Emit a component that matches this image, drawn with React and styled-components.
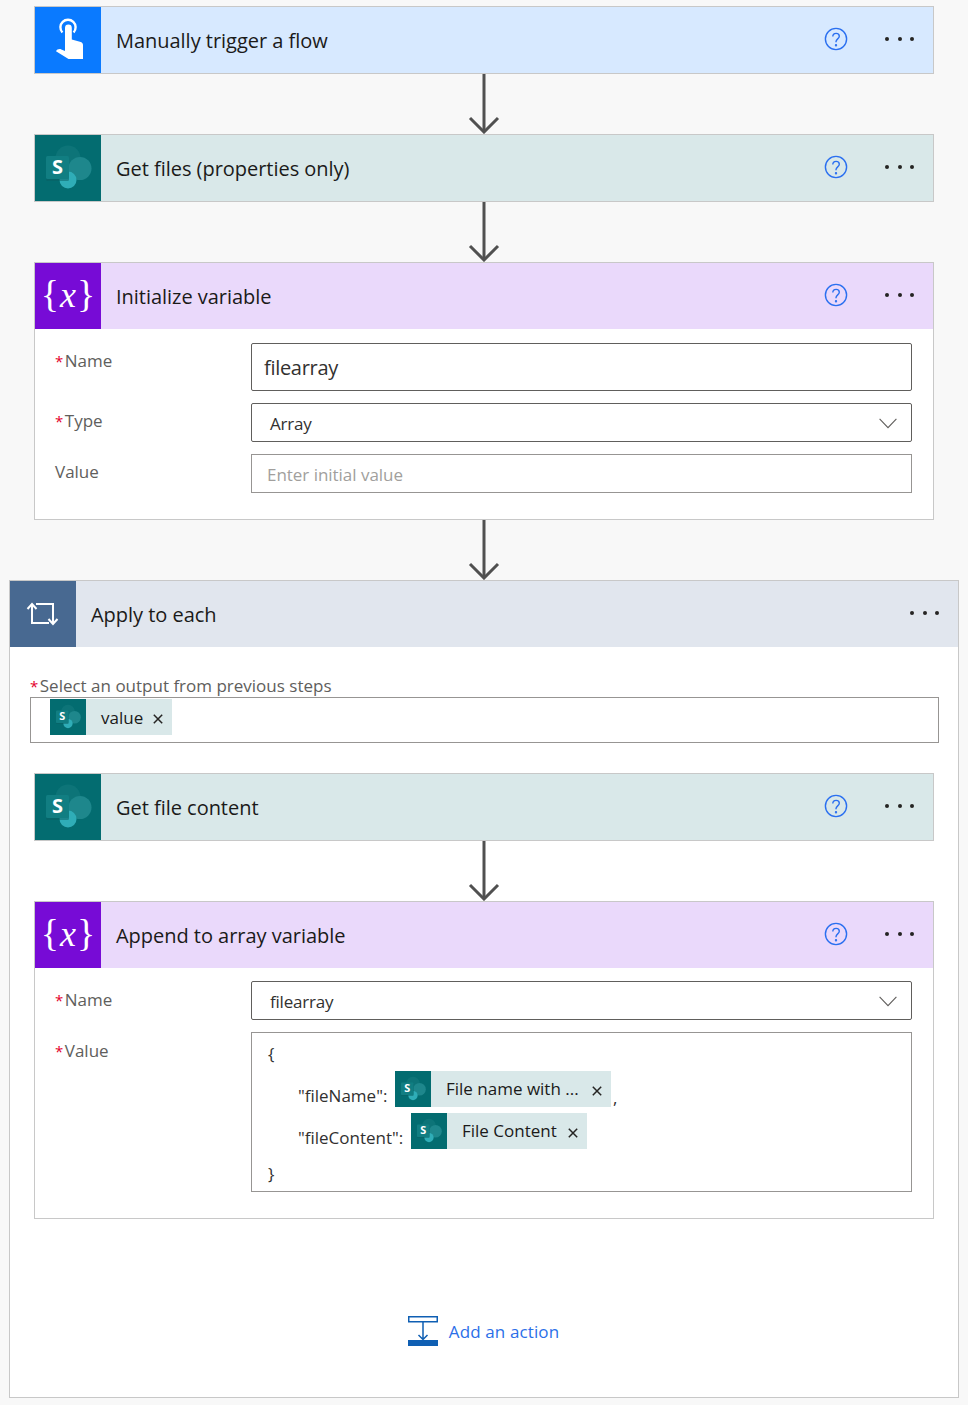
import React from 'react';
import styled, { createGlobalStyle } from 'styled-components';

const tones = {
    trigger: { head: '#d7e9ff', icon: '#0a7aff' },
    sharepoint: { head: '#d9e8e9', icon: '#036c70' },
    variable: { head: '#ead9fb', icon: '#770bd6' },
    loop: { head: '#e1e6ee', icon: '#486991' },
};

const GlobalStyle = createGlobalStyle`
    html, body {
        margin: 0;
        padding: 0;
        background-color: #f8f8f8;
        font-family: "Open Sans", "Liberation Sans", sans-serif;
        color: #201f1e;
    }
`;

const Page = styled.main`
    width: 968px;
    height: 1405px;
    box-sizing: border-box;
    padding-top: 6px;
    display: flex;
    flex-direction: column;
    align-items: center;
`;

const Card = styled.section`
    width: 900px;
    box-sizing: border-box;
    flex-shrink: 0;
    background-color: #fff;
    border: 1px solid #c8c8c8;
`;

const LoopCard = styled(Card)`
    width: 950px;
    height: 818px;
`;

const Header = styled.header`
    height: 66px;
    display: flex;
    align-items: center;
    background-color: ${({ $tone }) => tones[$tone].head};
`;

const IconBox = styled.div`
    width: 66px;
    height: 66px;
    flex-shrink: 0;
    display: flex;
    align-items: center;
    justify-content: center;
    background-color: ${({ $tone }) => tones[$tone].icon};
`;

const Title = styled.h2`
    flex: 1;
    margin: 2px 0 0 15px;
    font-size: 20px;
    line-height: 28px;
    font-weight: 400;
    letter-spacing: -0.03px;
    color: #1b1a19;
`;

const HelpButton = styled.svg`
    width: 24px;
    height: 24px;
    margin-right: 37px;
    margin-top: -2px;
`;

const Dots = styled.div`
    width: 29px;
    margin-right: 19px;
    margin-top: -2px;
    display: flex;
    justify-content: space-between;
`;

const Dot = styled.span`
    width: 4px;
    height: 4px;
    border-radius: 50%;
    background-color: #252423;
`;

const ArrowWrap = styled.svg`
    display: block;
    flex-shrink: 0;
    width: 32px;
    height: 60px;
`;

const Form = styled.div`
    padding: ${({ $top }) => $top}px 21px 26px 20px;
    display: flex;
    flex-direction: column;
    gap: 12px;
`;

const Row = styled.div`
    display: grid;
    grid-template-columns: 196px 661px;
`;

const Label = styled.label`
    padding-top: ${({ $drop }) => $drop}px;
    font-size: 17px;
    line-height: 24px;
    color: #605e5c;
`;

const Star = styled.span`
    margin-right: 1.5px;
    color: #e3002c;
    font-size: 15px;
`;

const Field = styled.div`
    box-sizing: border-box;
    height: ${({ $h }) => $h}px;
    display: flex;
    align-items: center;
    justify-content: space-between;
    border: 1px solid #605e5c;
    border-radius: 2px;
    background-color: #fff;
`;

const NameInput = styled(Field)`
    padding-left: 12px;
    font-size: 20px;
    letter-spacing: -0.3px;
    color: #323130;
`;

const SelectField = styled(Field)`
    padding: 2px 14px 0 18px;
    font-size: 17px;
    letter-spacing: -0.2px;
    color: #323130;
`;

const Placeholder = styled(Field)`
    padding: 2px 0 0 15px;
    border-color: #979593;
    border-radius: 0;
    font-size: 17px;
    letter-spacing: -0.03px;
    color: #a19f9d;
`;

const Chevron = styled.svg`
    width: 18px;
    height: 11px;
`;

const VarIcon = styled.span`
    font-family: "Liberation Serif", "DejaVu Serif", serif;
    font-size: 38px;
    line-height: 1;
    color: #fff;
    white-space: nowrap;
    margin-top: -5px;
    em {
        font-size: 36px;
        margin: 0 1px;
    }
`;

const LoopBody = styled.div`
    padding: 29px 19px 0 20px;
    display: flex;
    flex-direction: column;
`;

const OutputLabel = styled.div`
    height: 21px;
    font-size: 17px;
    line-height: 20px;
    color: #605e5c;
`;

const OutputBox = styled.div`
    box-sizing: border-box;
    height: 46px;
    padding: 1px 0 0 19px;
    display: flex;
    border: 1px solid #979593;
`;

const Token = styled.span`
    box-sizing: border-box;
    width: ${({ $w }) => $w}px;
    height: 36px;
    flex-shrink: 0;
    display: inline-flex;
    align-items: center;
    background-color: #d9e8e9;
`;

const TokenIcon = styled.span`
    width: 36px;
    height: 36px;
    flex-shrink: 0;
    display: flex;
    background-color: #036c70;
`;

const TokenText = styled.span`
    flex: 1;
    padding-left: 15px;
    font-size: 17px;
    white-space: nowrap;
    color: #1b1a19;
`;

const Close = styled.svg`
    width: 10px;
    height: 10px;
    margin: 4px 9px 0 0;
`;

const Flow = styled.div`
    margin: 30px 5px 0 4px;
    display: flex;
    flex-direction: column;
    align-items: center;
`;

const CodeBox = styled.div`
    box-sizing: border-box;
    height: 160px;
    padding: 9px 0 0 16px;
    border: 1px solid #979593;
    font-size: 17px;
    line-height: 24px;
    color: #323130;
`;

const Brace = styled.div`
    margin-top: ${({ $top }) => $top}px;
`;

const CodeRow = styled.div`
    display: flex;
    align-items: flex-end;
    margin-top: ${({ $top }) => $top}px;
    padding-left: 30px;
`;

const Key = styled.span`
    width: ${({ $w }) => $w}px;
    margin-bottom: -1px;
    flex-shrink: 0;
    white-space: nowrap;
`;

const Comma = styled.span`
    margin-left: 2px;
    line-height: 18px;
`;

const AddAction = styled.button`
    margin: 97px auto 0;
    padding: 0 2px 0 0;
    border: 0;
    background: none;
    display: flex;
    align-items: center;
    gap: 11px;
    font-family: inherit;
    font-size: 17px;
    letter-spacing: 0.12px;
    color: #2b6fe8;
`;

function SharePointLogo() {
    return (
        <svg width="100%" height="100%" viewBox="0 0 66 66">
            <circle cx="33" cy="23" r="12.5" fill="#0d7478" />
            <circle cx="45" cy="33.5" r="11.5" fill="#1e878c" />
            <circle cx="33" cy="45" r="8.5" fill="#2fadb7" />
            <rect x="11" y="22" width="23" height="24" rx="1.5" fill="#0a5e62" opacity=".5" />
            <rect x="11" y="21" width="23" height="23" rx="1.5" fill="#117e82" />
            <text x="22.5" y="39" textAnchor="middle" fontFamily="Open Sans, sans-serif" fontWeight="700" fontSize="20" fill="#fff">S</text>
        </svg>
    );
}

function HandIcon() {
    return (
        <svg width="66" height="66" viewBox="0 0 66 66">
            <path d="M27.4 25.5a7.6 7.6 0 1 1 11.2 0" fill="none" stroke="#fff" strokeWidth="2.4" />
            <path d="M30 21a3.4 3.4 0 0 1 6.8 0v11.5l9 2.6c1.5.5 2.2 1.6 2.2 3V52H33.5L21 44.2c.8-1.8 3.4-2.7 5.3-1.8l3.7 1.6z" fill="#fff" />
        </svg>
    );
}

function LoopIcon() {
    return (
        <svg width="66" height="66" viewBox="0 0 66 66" fill="none" stroke="#fff" strokeWidth="2">
            <path d="M22 24v18h17" />
            <path d="M26 23h17v19" />
            <path d="M17.5 28l4.5-5 4.5 5" />
            <path d="M38.5 38l4.5 5 4.5-5" />
        </svg>
    );
}

function Help() {
    return (
        <HelpButton viewBox="0 0 24 24" fill="none" stroke="#2a6ff0" strokeWidth="1.4">
            <circle cx="12" cy="12" r="10.6" />
            <path d="M8.8 9.6c0-2 1.4-3.2 3.3-3.2s3.2 1.2 3.2 2.9c0 2.6-3.3 2.6-3.3 5.4v.6" />
            <circle cx="12" cy="18.2" r=".5" fill="#2a6ff0" />
        </HelpButton>
    );
}

function More() {
    return (
        <Dots>
            <Dot />
            <Dot />
            <Dot />
        </Dots>
    );
}

function Arrow() {
    return (
        <ArrowWrap viewBox="0 0 32 60" fill="none" stroke="#505050" strokeWidth="3">
            <path d="M16 0v57" />
            <path d="M2 44l14 14 14-14" />
        </ArrowWrap>
    );
}

function DownChevron() {
    return (
        <Chevron viewBox="0 0 18 11" fill="none" stroke="#605e5c" strokeWidth="1.1">
            <path d="M.6.8L9 9.6 17.4.8" />
        </Chevron>
    );
}

function CloseIcon() {
    return (
        <Close viewBox="0 0 10 10" stroke="#252423" strokeWidth="1.5">
            <path d="M.8.8l8.4 8.4M9.2.8L.8 9.2" />
        </Close>
    );
}

function VariableGlyph() {
    return <VarIcon>{'{'}<em>x</em>{'}'}</VarIcon>;
}

function CardHeader({ tone, icon, title, help = true }) {
    return (
        <Header $tone={tone}>
            <IconBox $tone={tone}>{icon}</IconBox>
            <Title>{title}</Title>
            {help && <Help />}
            <More />
        </Header>
    );
}

function OutputToken({ width, children }) {
    return (
        <Token $w={width}>
            <TokenIcon><SharePointLogo /></TokenIcon>
            <TokenText>{children}</TokenText>
            <CloseIcon />
        </Token>
    );
}

function FormLabel({ required, drop = 6, children }) {
    return (
        <Label $drop={drop}>
            {required && <Star>*</Star>}
            {children}
        </Label>
    );
}

export default function App() {
    return (
        <Page>
            <GlobalStyle />
            <Card>
                <CardHeader tone="trigger" icon={<HandIcon />} title="Manually trigger a flow" />
            </Card>
            <Arrow />
            <Card>
                <CardHeader tone="sharepoint" icon={<SharePointLogo />} title="Get files (properties only)" />
            </Card>
            <Arrow />
            <Card>
                <CardHeader tone="variable" icon={<VariableGlyph />} title="Initialize variable" />
                <Form $top={14}>
                    <Row>
                        <FormLabel required>Name</FormLabel>
                        <NameInput $h={48}>filearray</NameInput>
                    </Row>
                    <Row>
                        <FormLabel required>Type</FormLabel>
                        <SelectField $h={39}>Array<DownChevron /></SelectField>
                    </Row>
                    <Row>
                        <FormLabel>Value</FormLabel>
                        <Placeholder $h={39}>Enter initial value</Placeholder>
                    </Row>
                </Form>
            </Card>
            <Arrow />
            <LoopCard>
                <CardHeader tone="loop" icon={<LoopIcon />} title="Apply to each" help={false} />
                <LoopBody>
                    <OutputLabel><Star>*</Star>Select an output from previous steps</OutputLabel>
                    <OutputBox>
                        <OutputToken width={122}>value</OutputToken>
                    </OutputBox>
                    <Flow>
                        <Card>
                            <CardHeader tone="sharepoint" icon={<SharePointLogo />} title="Get file content" />
                        </Card>
                        <Arrow />
                        <Card>
                            <CardHeader tone="variable" icon={<VariableGlyph />} title="Append to array variable" />
                            <Form $top={13}>
                                <Row>
                                    <FormLabel required drop={7}>Name</FormLabel>
                                    <SelectField $h={39}>filearray<DownChevron /></SelectField>
                                </Row>
                                <Row>
                                    <FormLabel required drop={7}>Value</FormLabel>
                                    <CodeBox>
                                        <Brace $top={0}>{'{'}</Brace>
                                        <CodeRow $top={5}>
                                            <Key $w={97}>"fileName":</Key>
                                            <OutputToken width={216}>File name with ...</OutputToken>
                                            <Comma>,</Comma>
                                        </CodeRow>
                                        <CodeRow $top={6}>
                                            <Key $w={113}>"fileContent":</Key>
                                            <OutputToken width={176}>File Content</OutputToken>
                                        </CodeRow>
                                        <Brace $top={13}>{'}'}</Brace>
                                    </CodeBox>
                                </Row>
                            </Form>
                        </Card>
                    </Flow>
                    <AddAction>
                        <svg width="30" height="30" viewBox="0 0 30 30" fill="none" stroke="#0f5fb3" strokeWidth="1.5">
                            <rect x=".75" y=".75" width="28.5" height="5" />
                            <path d="M15 6v17M10.5 19l4.5 4.5 4.5-4.5" />
                            <rect x="0" y="24" width="30" height="6" fill="#0f5fb3" stroke="none" />
                        </svg>
                        Add an action
                    </AddAction>
                </LoopBody>
            </LoopCard>
        </Page>
    );
}
